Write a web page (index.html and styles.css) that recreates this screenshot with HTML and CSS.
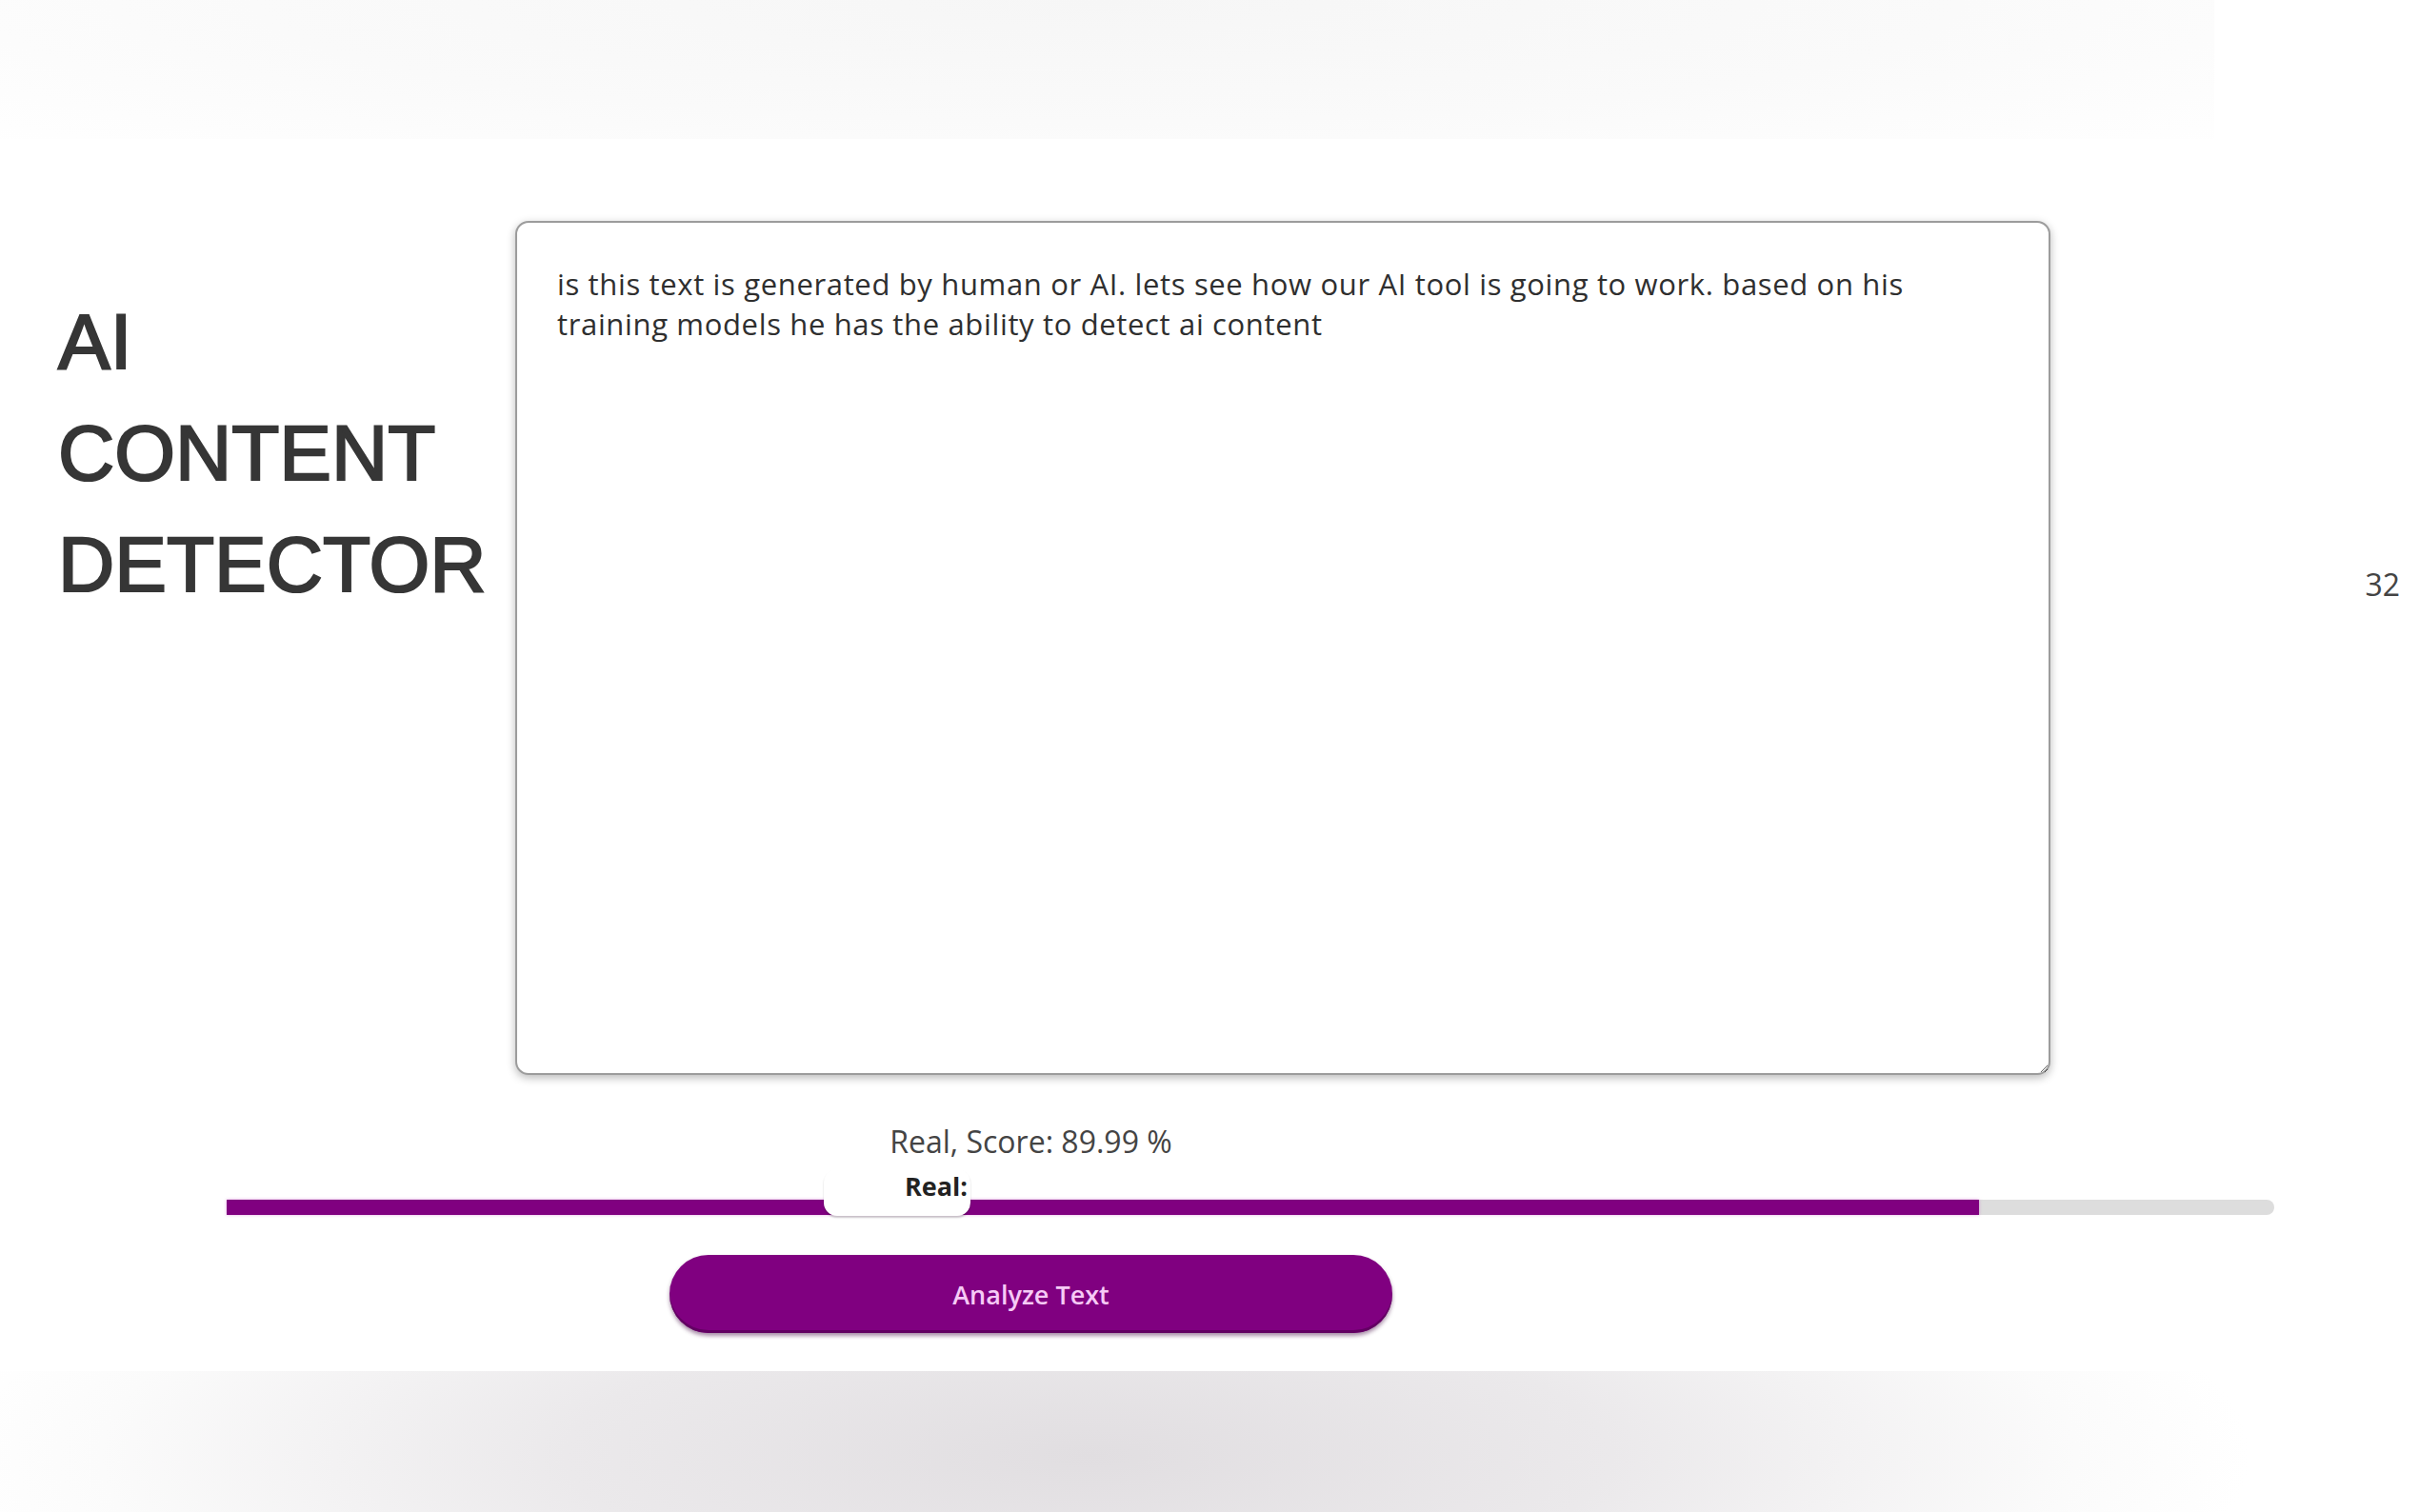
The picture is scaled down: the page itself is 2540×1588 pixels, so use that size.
FILE: index.html
```html
<!DOCTYPE html>
<html lang="en">
<head>
    <meta charset="UTF-8">
    <meta name="viewport" content="width=device-width, initial-scale=1.0">
    <title>AI Content Detector</title>
    <link rel="stylesheet" href="styles.css">
</head>
<body>
    <div class="top-shade"></div>

    <main class="detector">
        <section class="input-row">
            <h1 class="title">AI<br>CONTENT<br>DETECTOR</h1>
            <textarea class="text-input" spellcheck="false">is this text is generated by human or AI. lets see how our AI tool is going to work. based on his training models he has the ability to detect ai content</textarea>
            <span class="char-count">32</span>
        </section>

        <section class="result">
            <p class="score">Real, Score: 89.99 %</p>
            <div class="meter">
                <div class="meter-fill" style="width: 85.6%"></div>
                <span class="meter-tip">Real:</span>
            </div>
            <button class="analyze-btn">Analyze Text</button>
        </section>
    </main>

    <div class="bottom-shade"></div>
</body>
</html>
```

FILE: styles.css
```css
* {
    margin: 0;
    padding: 0;
    box-sizing: border-box;
}

body {
    font-family: 'Open Sans', 'Liberation Sans', sans-serif;
    background: #ffffff;
    color: #3c3c3c;
    height: 100vh;
    overflow: hidden;
    display: flex;
    flex-direction: column;
}

/* soft grey bands top and bottom */
.top-shade {
    height: 146px;
    width: 2325px;
    flex: none;
    background: radial-gradient(ellipse 70% 160% at 50% 0%, #f6f6f6 0%, #fafafa 55%, #ffffff 100%);
}

.bottom-shade {
    margin-top: auto;
    height: 148px;
    flex: none;
    background: radial-gradient(ellipse 48% 220% at 45% 60%, #e1dee1 0%, #ebe9eb 45%, #fbfbfb 85%, #ffffff 100%);
}

.detector {
    margin-top: 86px;
}

/* heading + textarea */
.input-row {
    display: flex;
    align-items: flex-start;
    padding: 0 20px 0 61px;
}

.title {
    width: 480px;
    flex: none;
    margin-top: 68px;
    font-family: 'Liberation Sans', Arial, sans-serif;
    font-size: 82px;
    line-height: 117px;
    font-weight: 400;
    color: #363636;
    -webkit-text-stroke: 2.2px #363636;
}

.text-input {
    width: 1612px;
    height: 897px;
    flex: none;
    padding: 43px 86px 44px 42px;
    font-family: 'Open Sans', sans-serif;
    font-size: 31px;
    letter-spacing: 0.65px;
    line-height: 42px;
    color: #2f2f2f;
    border: 2px solid #9c9c9c;
    border-radius: 14px;
    box-shadow: 0 3px 10px rgba(0, 0, 0, 0.28);
    outline: none;
    background: #ffffff;
}

.char-count {
    margin-left: auto;
    margin-top: 360px;
    font-size: 32px;
    color: #444444;
}

/* score, bar, button */
.result {
    margin-top: 48px;
}

.score {
    margin-left: 703px;
    width: 759px;
    text-align: center;
    font-size: 32px;
    line-height: 44px;
    color: #444444;
}

.meter {
    position: relative;
    height: 16px;
    margin: 39px 152px 0 238px;
    background: #dddddd;
    border-radius: 0 8px 8px 0;
}

.meter-fill {
    height: 100%;
    background: #800080;
    box-shadow: 0 0 3px rgba(200, 80, 200, 0.5);
}

.meter-tip {
    position: absolute;
    left: 627px;
    top: -32px;
    width: 154px;
    height: 49px;
    padding: 0 0 0 85px;
    background: #ffffff;
    border-radius: 14px;
    box-shadow: 0 2px 2px rgba(0, 0, 0, 0.2);
    font-size: 27px;
    font-weight: 700;
    line-height: 36px;
    color: #222222;
}

.analyze-btn {
    display: block;
    margin: 42px 0 0 703px;
    width: 759px;
    height: 82px;
    border: none;
    border-radius: 41px;
    background: #800080;
    box-shadow: inset 0 -3px 0 #620062, 0 3px 4px rgba(60, 0, 60, 0.45);
    font-family: 'Open Sans', sans-serif;
    font-size: 27px;
    font-weight: 600;
    color: #f6caf6;
    cursor: pointer;
}
```
